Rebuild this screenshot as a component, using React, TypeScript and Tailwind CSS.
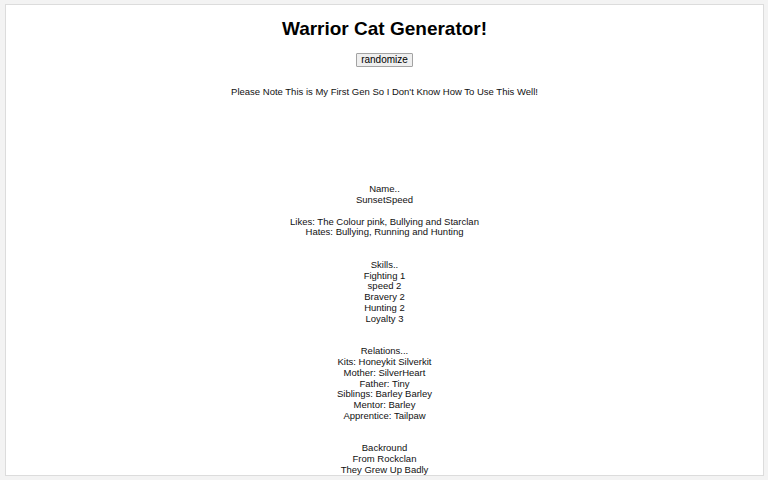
import React from "react";

const lines: string[] = [
  "",
  "",
  "",
  "",
  "",
  "",
  "",
  "",
  "Name..",
  "SunsetSpeed",
  "",
  "Likes: The Colour pink, Bullying and Starclan",
  "Hates: Bullying, Running and Hunting",
  "",
  "",
  "Skills..",
  "Fighting 1",
  "speed 2",
  "Bravery 2",
  "Hunting 2",
  "Loyalty 3",
  "",
  "",
  "Relations...",
  "Kits: Honeykit Silverkit",
  "Mother: SilverHeart",
  "Father: Tiny",
  "Siblings: Barley Barley",
  "Mentor: Barley",
  "Apprentice: Tailpaw",
  "",
  "",
  "Backround",
  "From Rockclan",
  "They Grew Up Badly",
  "",
  "",
];

export default function App() {
  return (
    <div className="w-[768px] h-[480px] bg-[#f3f3f3] pt-[4px] pb-[4px] pl-[5px] pr-[4px] overflow-hidden">
      <div
        className="h-full bg-white border border-[#dcdcdc] overflow-hidden text-center text-black"
        style={{ fontFamily: '"Liberation Sans", Arial, sans-serif' }}
      >
        <h1 className="mt-[13px] text-[19px] leading-[22px] font-bold">Warrior Cat Generator!</h1>
        <div className="mt-[13px] flex justify-center">
          <button className="h-[14px] px-[4px] text-[10px] leading-[12px] bg-[#efefef] border border-[#a3a3a3] rounded-[1px] text-black">
            randomize
          </button>
        </div>
        <div className="mt-[20px] text-[9.5px] leading-[10.8px] text-[#111]">
          <div className="h-[10.8px]">Please Note This is My First Gen So I Don't Know How To Use This Well!</div>
          {lines.map((l, i) => (
            <div key={i} className="h-[10.8px]">
              {l === "" ? "\u00a0" : l}
            </div>
          ))}
        </div>
      </div>
    </div>
  );
}
